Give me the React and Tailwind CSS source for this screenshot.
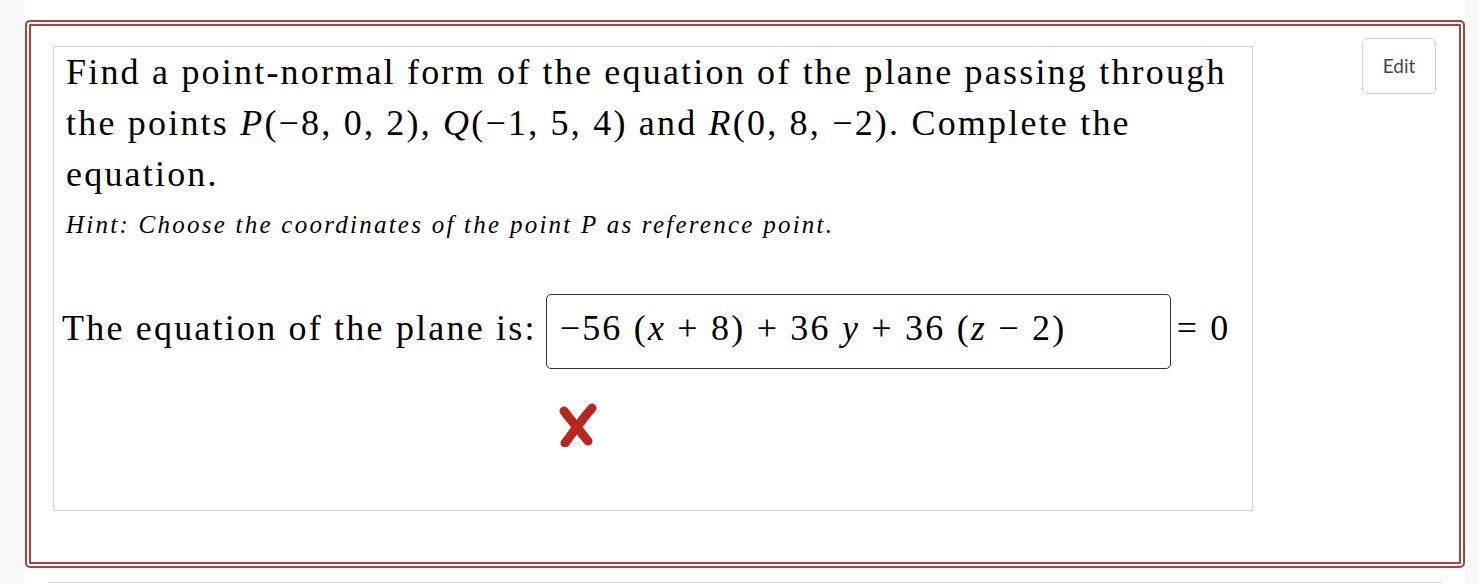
import React from 'react';

const serif = { fontFamily: '"Liberation Serif", "DejaVu Serif", serif' };

const Var = ({ children }) => <span className="italic">{children}</span>;

const WrongMark = () => (
  <svg width="40" height="44" viewBox="0 0 40 44" className="block">
    <path d="M6 8 C 12 16, 22 28, 30 38" stroke="#b8261f" strokeWidth="9" strokeLinecap="round" fill="none" />
    <path d="M34 5 C 26 14, 16 28, 7 40" stroke="#b8261f" strokeWidth="9" strokeLinecap="round" fill="none" />
  </svg>
);

const App = () => {
  return (
    <div className="flex min-h-[584px] bg-white">
      <div className="w-[25px] shrink-0 bg-[#f8f8f8]" />
      <div className="w-[1440px] shrink-0 pt-[20px]">
        {/* question card */}
        <div className="flex h-[548px] justify-between rounded-[5px] border-[6px] border-double border-[#a3443f] pl-[22px] pr-[23px] pt-[20px]">
          <div className="h-[465px] w-[1200px] border border-[#d0d0d0] pl-[12px] text-black" style={serif}>
            <div className="text-[36px] leading-[51px] tracking-[2.2px]">
              <div className="whitespace-nowrap">Find a point-normal form of the equation of the plane passing through</div>
              <div className="whitespace-nowrap">
                the points <Var>P</Var>(−8, 0, 2), <Var>Q</Var>(−1, 5, 4) and <Var>R</Var>(0, 8, −2). Complete the
              </div>
              <div>equation.</div>
            </div>
            <div className="mt-[10px] whitespace-nowrap text-[25px] italic leading-[30px] tracking-[2.25px]">
              Hint: Choose the coordinates of the point P as reference point.
            </div>

            <div className="-ml-[4px] mt-[54px] flex items-center text-[36px] tracking-[2.2px]">
              <span className="whitespace-nowrap pb-[8px] leading-[40px]">The equation of the plane is:</span>
              <div className="ml-[9px] flex h-[75px] w-[625px] shrink-0 items-center rounded-[5px] border border-[#333] pl-[13px]">
                <span className="whitespace-nowrap pb-[8px] leading-[40px]">
                  −56 (<Var>x</Var> + 8) + 36 <Var>y</Var> + 36 (<Var>z</Var> − 2)
                </span>
              </div>
              <span className="ml-[6px] whitespace-nowrap pb-[8px] leading-[40px]">= 0</span>
            </div>

            <div className="ml-[492px] mt-[34px]">
              <WrongMark />
            </div>
          </div>

          <button
            className="-mt-[8px] h-[56px] w-[74px] rounded-[5px] border border-[#cfcfcf] bg-white text-[19px] text-[#444]"
            style={{ fontFamily: 'Lato, "Open Sans", sans-serif' }}
          >
            Edit
          </button>
        </div>
        <div className="mx-[23px] mt-[14px] border-t border-[#d8d8d8]" />
      </div>
      <div className="flex-1 bg-[#f8f8f8]" />
    </div>
  );
};

export default App;
